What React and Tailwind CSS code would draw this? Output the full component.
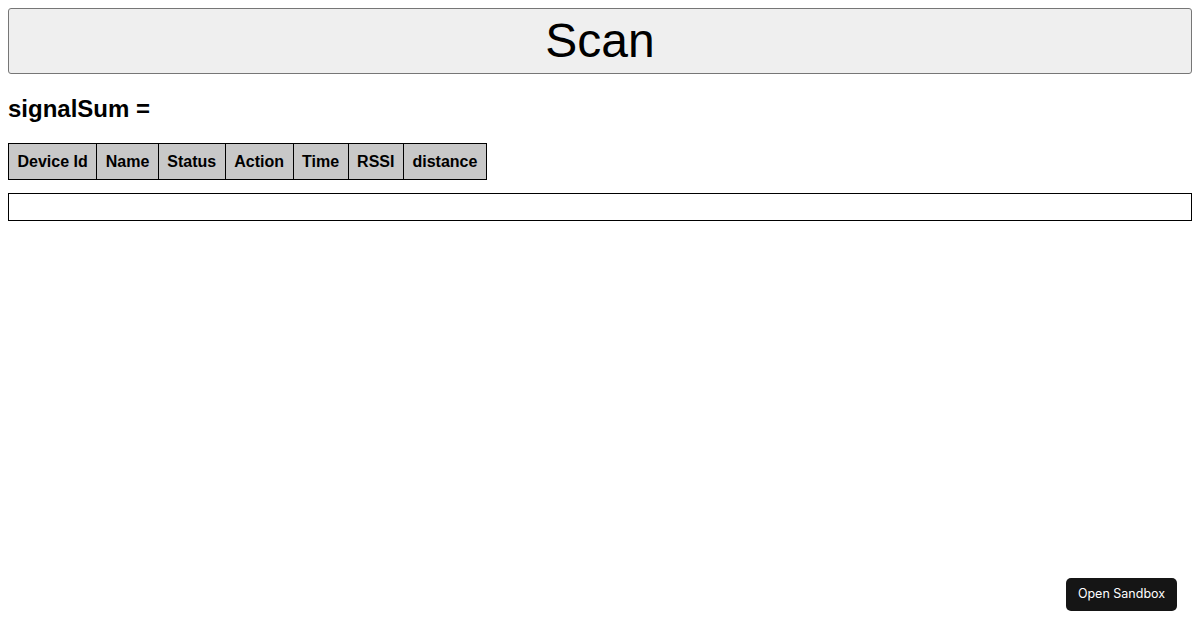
export default function App() {
  const cols = ["Device Id", "Name", "Status", "Action", "Time", "RSSI", "distance"];
  return (
    <div className="min-h-[630px] bg-white p-2 text-black" style={{ fontFamily: '"Liberation Sans", Arial, sans-serif' }}>
      <button className="block h-[66px] w-full rounded-[3px] border border-[#767676] bg-[#efefef] text-[48px] leading-none text-black">
        Scan
      </button>
      <h2 className="mt-[21px] text-[24px] font-bold leading-[27px]">signalSum =</h2>
      <div className="mt-[21px] flex w-max border border-black bg-[#c8c8c8]">
        {cols.map((c, i) => (
          <div
            key={c}
            className={`h-[35px] px-[8.5px] text-[16px] font-bold leading-[35px] ${i > 0 ? "border-l border-black" : ""}`}
          >
            {c}
          </div>
        ))}
      </div>
      <div className="mt-[13px] h-[28px] w-full border border-black"></div>
      <div
        className="fixed right-[23px] bottom-[19px] flex h-[33px] w-[111px] items-center justify-center rounded-[5px] bg-[#151515] text-[12.5px] text-white"
        style={{ fontFamily: 'Inter, "Liberation Sans", sans-serif' }}
      >
        Open Sandbox
      </div>
    </div>
  );
}
